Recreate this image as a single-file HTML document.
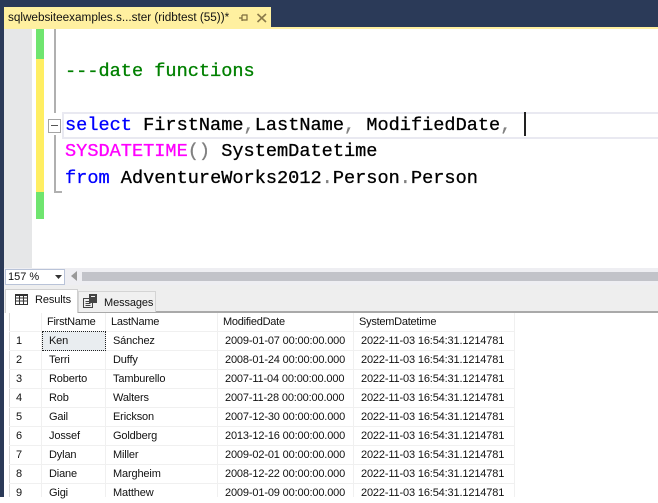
<!DOCTYPE html>
<html><head><meta charset="utf-8"><style>
html,body{margin:0;padding:0}
body{width:658px;height:497px;overflow:hidden;position:relative;background:#fff;font-family:"Liberation Sans",sans-serif}
div{position:absolute;box-sizing:border-box}
.code{font:18.6px/27px "Liberation Mono",monospace;white-space:pre;color:#000;left:65px;-webkit-text-stroke:.3px currentColor}
.k{color:#0000ff}.g{color:#808080}.p{color:#ff00ff}
.t{font-size:11px;line-height:19px;margin-top:1px;white-space:pre;color:#111;letter-spacing:-.15px}
.h{letter-spacing:-.25px}
.hl{position:absolute;left:9px;width:506px;height:1px;background:#f0f0f0}
.vl{position:absolute;top:313px;bottom:0;width:1px;background:#f0f0f0}
</style></head><body>
<div style="left:0;top:0;width:658px;height:27px;background:#2b3a58"></div>
<div style="left:0;top:0;width:4px;height:497px;background:#2b3a58"></div>
<div style="left:4px;top:7px;width:267px;height:22px;background:#fff0a0"></div>
<div style="left:4px;top:27px;width:654px;height:2px;background:#fff0a0"></div>
<div style="left:8px;top:9px;font-size:11.75px;line-height:18px;color:#111;white-space:pre;letter-spacing:-.02px">sqlwebsiteexamples.s...ster (ridbtest (55))*</div>
<svg style="position:absolute;left:237px;top:12px" width="32" height="12"><path d="M2 6H5M5 3V9M5 3H10V8H5" fill="none" stroke="#7d6c3c" stroke-width="1.2"/><path d="M20.5 2L29 10M29 2L20.5 10" stroke="#8a7a4a" stroke-width="1.6"/></svg>

<div style="left:4px;top:29px;width:28px;height:239px;background:#e6e7e8"></div>
<div style="left:36px;top:29px;width:8px;height:30px;background:#6fe56f"></div>
<div style="left:36px;top:59px;width:8px;height:133px;background:#ffee62"></div>
<div style="left:36px;top:192px;width:8px;height:27px;background:#6fe56f"></div>
<div style="left:54px;top:29px;width:2px;height:84px;background:#b0b0b0"></div>
<div style="left:54px;top:135px;width:2px;height:58px;background:#b0b0b0"></div>
<div style="left:54px;top:191px;width:8px;height:2px;background:#b0b0b0"></div>
<div style="left:48px;top:119px;width:13px;height:14px;border:1px solid #a5a5a5;background:#fff"></div>
<div style="left:51px;top:125px;width:7px;height:1px;background:#555"></div>
<div style="left:62px;top:112px;width:596px;height:27px;border-top:2px solid #e9e9f1;border-bottom:2px solid #e9e9f1;border-left:2px solid #e9e9f1"></div>

<div class="code" style="top:58px;color:#008000">---date functions</div>
<div class="code" style="top:112px"><span class="k">select</span> FirstName<span class="g">,</span>LastName<span class="g">,</span> ModifiedDate<span class="g">,</span></div>
<div class="code" style="top:138px"><span class="p">SYSDATETIME</span><span class="g">()</span> SystemDatetime</div>
<div class="code" style="top:165px"><span class="k">from</span> AdventureWorks2012<span class="g">.</span>Person<span class="g">.</span>Person</div>
<div style="left:524px;top:112px;width:2px;height:24px;background:#222"></div>

<div style="left:4px;top:268px;width:654px;height:17px;background:#eeeef2"></div>
<div style="left:5px;top:269px;width:60px;height:16px;background:#fff;border:1px solid #b9c3d8"></div>
<div style="left:8px;top:269px;font-size:11px;line-height:16px;color:#111">157 %</div>
<svg style="position:absolute;left:55px;top:275px" width="8" height="5"><path d="M0 0H7L3.5 4Z" fill="#333"/></svg>
<svg style="position:absolute;left:71px;top:271px" width="7" height="11"><path d="M6 0V10L0 5Z" fill="#999"/></svg>
<div style="left:82px;top:272px;width:576px;height:9px;background:#c2c3c9"></div>

<div style="left:4px;top:285px;width:654px;height:28px;background:#eeeeee"></div>
<div style="left:9px;top:311px;width:649px;height:2px;background:#a9a9a9"></div>
<div style="left:5px;top:289px;width:73px;height:24px;background:#fff;border:1px solid #d0d0d0;border-bottom:0"></div>
<div style="left:78px;top:291px;width:78px;height:21px;background:#f0f0f0;border:1px solid #d4d4d4;border-bottom:0"></div>
<svg style="position:absolute;left:15px;top:294px" width="13" height="11"><path d="M.5 .5H12.5V10.5H.5ZM.5 4H12.5M.5 7H12.5M4.5 2V10.5M8.5 2V10.5" fill="none" stroke="#333"/><rect x="0" y="0" width="13" height="2" fill="#333"/></svg>
<svg style="position:absolute;left:83px;top:294px" width="15" height="14"><path d="M.5 4.5H9.5V13.5H.5ZM2.5 7.5H7.5M2.5 9.5H7.5M2.5 11.5H7.5" fill="none" stroke="#444"/><rect x="6" y="0" width="8" height="9" fill="#444"/><rect x="8" y="2" width="4" height="1" fill="#eee"/></svg>
<div class="t" style="left:35px;top:290px;letter-spacing:-.1px">Results</div>
<div class="t" style="left:104px;top:293px;letter-spacing:-.1px">Messages</div>

<div style="left:9px;top:313px;width:1px;height:184px;background:#d8d8d8"></div>
<div class="vl" style="left:41px"></div><div class="vl" style="left:105px"></div><div class="vl" style="left:217px"></div><div class="vl" style="left:353px"></div><div class="vl" style="left:514px"></div>
<div class="hl" style="top:331px"></div><div class="hl" style="top:350px"></div><div class="hl" style="top:369px"></div><div class="hl" style="top:388px"></div><div class="hl" style="top:407px"></div><div class="hl" style="top:426px"></div><div class="hl" style="top:445px"></div><div class="hl" style="top:464px"></div><div class="hl" style="top:483px"></div>
<div style="left:42px;top:331px;width:64px;height:20px;background:#e9edf0;border:1px dotted #222"></div>

<div class="t h" style="left:47px;top:312px">FirstName</div><div class="t h" style="left:111px;top:312px">LastName</div><div class="t h" style="left:223px;top:312px">ModifiedDate</div><div class="t h" style="left:359px;top:312px">SystemDatetime</div>

<div class="t" style="left:16px;top:331px">1</div><div class="t" style="left:49px;top:331px">Ken</div><div class="t" style="left:113px;top:331px">Sánchez</div><div class="t" style="left:225px;top:331px">2009-01-07 00:00:00.000</div><div class="t" style="left:361px;top:331px">2022-11-03 16:54:31.1214781</div>
<div class="t" style="left:16px;top:350px">2</div><div class="t" style="left:49px;top:350px">Terri</div><div class="t" style="left:113px;top:350px">Duffy</div><div class="t" style="left:225px;top:350px">2008-01-24 00:00:00.000</div><div class="t" style="left:361px;top:350px">2022-11-03 16:54:31.1214781</div>
<div class="t" style="left:16px;top:369px">3</div><div class="t" style="left:49px;top:369px">Roberto</div><div class="t" style="left:113px;top:369px">Tamburello</div><div class="t" style="left:225px;top:369px">2007-11-04 00:00:00.000</div><div class="t" style="left:361px;top:369px">2022-11-03 16:54:31.1214781</div>
<div class="t" style="left:16px;top:388px">4</div><div class="t" style="left:49px;top:388px">Rob</div><div class="t" style="left:113px;top:388px">Walters</div><div class="t" style="left:225px;top:388px">2007-11-28 00:00:00.000</div><div class="t" style="left:361px;top:388px">2022-11-03 16:54:31.1214781</div>
<div class="t" style="left:16px;top:407px">5</div><div class="t" style="left:49px;top:407px">Gail</div><div class="t" style="left:113px;top:407px">Erickson</div><div class="t" style="left:225px;top:407px">2007-12-30 00:00:00.000</div><div class="t" style="left:361px;top:407px">2022-11-03 16:54:31.1214781</div>
<div class="t" style="left:16px;top:426px">6</div><div class="t" style="left:49px;top:426px">Jossef</div><div class="t" style="left:113px;top:426px">Goldberg</div><div class="t" style="left:225px;top:426px">2013-12-16 00:00:00.000</div><div class="t" style="left:361px;top:426px">2022-11-03 16:54:31.1214781</div>
<div class="t" style="left:16px;top:445px">7</div><div class="t" style="left:49px;top:445px">Dylan</div><div class="t" style="left:113px;top:445px">Miller</div><div class="t" style="left:225px;top:445px">2009-02-01 00:00:00.000</div><div class="t" style="left:361px;top:445px">2022-11-03 16:54:31.1214781</div>
<div class="t" style="left:16px;top:464px">8</div><div class="t" style="left:49px;top:464px">Diane</div><div class="t" style="left:113px;top:464px">Margheim</div><div class="t" style="left:225px;top:464px">2008-12-22 00:00:00.000</div><div class="t" style="left:361px;top:464px">2022-11-03 16:54:31.1214781</div>
<div class="t" style="left:16px;top:483px">9</div><div class="t" style="left:49px;top:483px">Gigi</div><div class="t" style="left:113px;top:483px">Matthew</div><div class="t" style="left:225px;top:483px">2009-01-09 00:00:00.000</div><div class="t" style="left:361px;top:483px">2022-11-03 16:54:31.1214781</div>
</body></html>
